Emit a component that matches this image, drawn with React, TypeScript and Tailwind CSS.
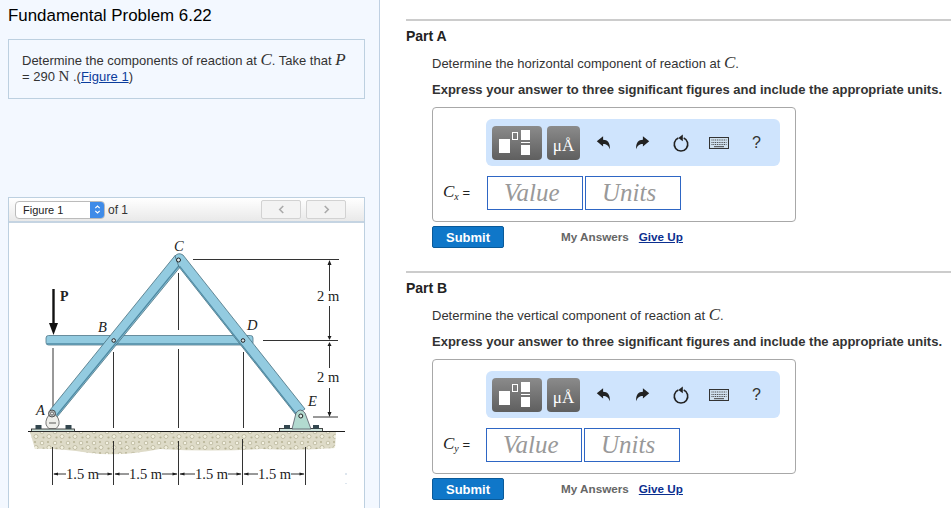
const sans = "font-['Liberation_Sans',Arial,sans-serif]";

function Truss() {
  const dark = "#1c1c1c";
  return (
    <svg viewBox="9 223 355 285" className="block w-[355px] h-[285px]">
      <defs>
        <pattern id="gravel" width="13" height="11" patternUnits="userSpaceOnUse">
          <rect width="13" height="11" fill="#dedbc8" />
          <circle cx="3" cy="3" r="1.800" fill="#f4f2e4" stroke="#aaa688" strokeWidth="0.600" />
          <circle cx="9" cy="2" r="1.100" fill="#b9b597" />
          <circle cx="10" cy="7.500" r="2" fill="#f2f0e0" stroke="#aaa688" strokeWidth="0.600" />
          <circle cx="4.500" cy="8.500" r="1.100" fill="#b5b193" />
        </pattern>
        <filter id="soft" x="-5%" y="-20%" width="110%" height="140%">
          <feGaussianBlur stdDeviation="0.400" />
        </filter>
      </defs>

      {/* ground */}
      <path d="M30 432H336L335 448Q300 451 262 449Q210 452 160 449Q120 457 90 453Q55 448 35 449Z" fill="url(#gravel)" filter="url(#soft)" />
      <path d="M28 431.500H345" stroke={dark} strokeWidth="1" />

      {/* dimension lines */}
      <g stroke={dark} strokeWidth="0.900" fill="none">
        <path d="M53 348V408M113.500 352V428M178.500 273V330M178.500 349V428M243.500 352V428" />
        <path d="M193 259.500H339M263 340.500H338M313 417H338" />
        <path d="M329.500 262V291M329.500 306V338M329.500 343V368M329.500 388V414" />
        <path d="M52.500 447V485M113.500 441V485M178.500 441V485M242.500 439V485M305.500 447V485" />
        <path d="M54 474H66M98 474H112M115 474H129M162 474H177M180 474H195M228 474H241M244 474H258M291 474H304" />
      </g>
      <g fill={dark}>
        <path d="M329.500 260l-2 5h4zM329.500 340l-2-4h4zM329.500 342l-2 4h4zM329.500 417l-2-5h4z" />
        <path d="M53 474l5-1.500v3zM112.500 474l-5-1.500v3zM114.500 474l5-1.500v3zM177.500 474l-5-1.500v3zM179.500 474l5-1.500v3zM241.500 474l-5-1.500v3zM243.500 474l5-1.500v3zM304.500 474l-5-1.500v3z" />
      </g>

      {/* horizontal member */}
      <rect x="46" y="335.500" width="207" height="9.500" rx="2.500" fill="#93cbe0" stroke="#4f7688" strokeWidth="0.800" />
      <path d="M47 343.800H252" stroke="#4f8aa3" strokeWidth="1.200" />

      {/* base plates */}
      <g fill="#cfe3dc" stroke={dark} strokeWidth="0.800">
        <rect x="31.500" y="429" width="43" height="2.500" />
        <rect x="279.500" y="428.500" width="43" height="3" />
      </g>
      <g fill="#33474f">
        <rect x="35.500" y="425" width="6" height="4" />
        <rect x="65.500" y="425" width="6" height="4" />
        <rect x="284" y="425" width="6" height="4" />
        <rect x="313" y="425" width="6" height="4" />
      </g>

      {/* leaning members */}
      <path d="M50 410L175.500 255L181 266L57 417Z" fill="#93cbe0" stroke="#49707f" strokeWidth="0.800" />
      <path d="M56.500 415.500L180 264.500" stroke="#4f8aa3" strokeWidth="1.200" />
      <path d="M175 256Q178.500 252 183 255L305 409L296 415L179 267Z" fill="#93cbe0" stroke="#49707f" strokeWidth="0.800" />
      <path d="M179.500 266L296 413.500" stroke="#4f8aa3" strokeWidth="1.200" />

      {/* support at A */}
      <path d="M47 418Q52 408 58 418Q61 425 56 428.500H49Q44 425 47 418Z" fill="#eeeeea" stroke="#555" strokeWidth="0.800" />
      <path d="M49 423H56" stroke="#333" strokeWidth="0.800" />
      <circle cx="52" cy="413.500" r="3.500" fill="#b8bcbc" stroke="#333" strokeWidth="0.800" />
      <circle cx="52" cy="413.500" r="1.500" fill="#eee" stroke="#333" strokeWidth="0.600" />

      {/* support at E */}
      <path d="M292 429L296 413Q300 407 305 413L311 429Z" fill="#b2dad0" stroke="#445" strokeWidth="0.700" />
      <circle cx="300.800" cy="416" r="2" fill="#dfeee9" stroke="#222" strokeWidth="1" />

      {/* pins */}
      <circle cx="178.500" cy="260" r="2" fill="#dce8ec" stroke="#222" strokeWidth="1" />
      <circle cx="113.700" cy="340.500" r="1.800" fill="#dce8ec" stroke="#222" strokeWidth="1" />
      <circle cx="243" cy="340.500" r="1.800" fill="#dce8ec" stroke="#222" strokeWidth="1" />

      {/* load P */}
      <path d="M53.500 289V326" stroke="#111" strokeWidth="2.400" />
      <path d="M49 323H58L53.500 335Z" fill="#111" />

      {/* labels */}
      <g fontFamily="'Liberation Serif', serif" fontSize="14.500" fill="#222">
        <text x="60" y="301" fontWeight="700" fontSize="14">P</text>
        <g fontStyle="italic">
          <text x="174" y="251">C</text>
          <text x="98" y="331.500">B</text>
          <text x="247" y="330">D</text>
          <text x="36" y="415">A</text>
          <text x="308" y="406">E</text>
        </g>
        <text x="317" y="301">2 m</text>
        <text x="317" y="382">2 m</text>
        <text x="66" y="478.500">1.5 m</text>
        <text x="129" y="478.500">1.5 m</text>
        <text x="195" y="478.500">1.5 m</text>
        <text x="258" y="478.500">1.5 m</text>
      </g>
      <path d="M346 473V475M346 483V484" stroke="#bcd" strokeWidth="1" />
    </svg>
  );
}

function Toolbar() {
  return (
    <div className="w-[294px] h-[47px] bg-[#cfe4fd] rounded-[6px] flex items-center pl-[6px]">
      <div className="w-[50px] h-[34px] rounded-[4px] bg-gradient-to-b from-[#8b8b8b] to-[#5f5f5f] relative">
        <span className="absolute left-[7px] top-[13px] w-[11px] h-[14px] bg-white" />
        <span className="absolute left-[20px] top-[6px] w-[6px] h-[8px] border border-white" />
        <span className="absolute left-[29px] top-[4px] w-[9px] h-[10px] bg-white" />
        <span className="absolute left-[29px] top-[16px] w-[9px] h-[1px] bg-white" />
        <span className="absolute left-[29px] top-[19px] w-[9px] h-[10px] bg-white" />
      </div>
      <div className="w-[33px] h-[34px] ml-[5px] rounded-[4px] bg-gradient-to-b from-[#8b8b8b] to-[#5f5f5f] text-white text-[17px] font-['Liberation_Serif',serif] flex items-end justify-center pb-[6px] leading-none">
        μÅ
      </div>
      <svg viewBox="0 0 20 20" className="w-[18px] h-[18px] ml-[15px]">
        <path d="M2 8L9 2.500V6.500C14 6.500 17 10 16.500 17C15 12.500 13 11 9 11V14Z" fill="#222" />
      </svg>
      <svg viewBox="0 0 20 20" className="w-[18px] h-[18px] ml-[20px]">
        <path d="M18 8L11 2.500V6.500C6 6.500 3 10 3.500 17C5 12.500 7 11 11 11V14Z" fill="#222" />
      </svg>
      <svg viewBox="0 0 20 20" className="w-[18px] h-[18px] ml-[21px]">
        <path d="M7 4.500A7.500 7.500 0 1 0 13 4.500" fill="none" stroke="#222" strokeWidth="1.800" />
        <path d="M12 0.500L7 4.500L12 8Z" fill="#222" />
      </svg>
      <svg viewBox="0 0 20 12" className="w-[20px] h-[12px] ml-[19px]">
        <rect x="0.500" y="0.500" width="19" height="11" fill="#cfe0ee" stroke="#333" />
        <path d="M2.500 3H17.500M2.500 5.500H17.500M2.500 7.500H17.500" stroke="#444" strokeWidth="1" strokeDasharray="1 0.800" />
        <path d="M5 9.700H15" stroke="#444" strokeWidth="1" />
      </svg>
      <span className={`ml-[23px] text-[16px] leading-none text-[#333] ${sans}`}>?</span>
    </div>
  );
}

function Part({ name, word, sub, labelW, gap, sectionHeight }: { name: string; word: string; sub: string; labelW: string; gap: string; sectionHeight: string }) {
  return (
    <section className={`border-t-2 border-[#cccccc] ${sectionHeight}`}>
      <h2 className="text-[14px] font-bold text-[#222] leading-[16px] pt-[7px]">{name}</h2>
      <div className="pl-[26px]">
        <p className="h-[16px] text-[13px] text-[#333] leading-[16px] mt-[10px]">
          Determine the {word} component of reaction at <i className="font-['Liberation_Serif',serif] text-[17px] leading-none">C</i>.
        </p>
        <p className="text-[13px] font-bold text-[#333] leading-[16px] mt-[12px]">
          Express your answer to three significant figures and include the appropriate units.
        </p>
        <div className="w-[364px] h-[115px] mt-[9px] border border-[#a8a8a8] rounded-[4px] pt-[11px]">
          <div className="pl-[53px]">
            <Toolbar />
          </div>
          <div className="flex items-center mt-[10px]">
            <span className={`${labelW} ml-[10px] shrink-0 whitespace-nowrap text-[13px] text-[#222]`}>
              <i className="font-['Liberation_Serif',serif] text-[17px] leading-none">C</i>
              <i className="font-['Liberation_Serif',serif] text-[10px] leading-none relative top-[3px]">{sub}</i> =
            </span>
            <div className={`w-[96px] h-[34px] ${gap} border border-[#2e66c4] text-[#999] italic text-[25px] font-['Liberation_Serif',serif] flex items-center pl-[16px] pb-[2px] leading-none`}>
              Value
            </div>
            <div className="w-[96px] h-[34px] ml-[2px] border border-[#2e66c4] text-[#999] italic text-[25px] font-['Liberation_Serif',serif] flex items-center pl-[16px] pb-[2px] leading-none">
              Units
            </div>
          </div>
        </div>
        <div className="flex items-center mt-[4px]">
          <button className="w-[72px] h-[22px] rounded-[2px] bg-[#0f77c9] border border-[#0a5a99] text-white font-bold text-[13px] leading-none">
            Submit
          </button>
          <span className="ml-[57px] text-[11.700px] font-bold text-[#666]">My Answers</span>
          <a className="ml-[10px] text-[11.700px] font-bold text-[#0b2f8f] underline">Give Up</a>
        </div>
      </div>
    </section>
  );
}

export default function App() {
  return (
    <div className={`w-[951px] h-[508px] overflow-hidden flex bg-white ${sans}`}>
      <aside className="w-[380px] h-[508px] shrink-0 bg-[#f3f8ff] border-r border-[#bfd0e2] pl-[8px] pr-[14px]">
        <h1 className="text-[16.900px] text-black leading-[20px] pt-[6px]">Fundamental Problem 6.22</h1>
        <div className="h-[60px] mt-[13px] border border-[#bdd0e0] pl-[13px] pt-[11px] text-[13px] leading-[16px] text-[#333]">
          <div className="h-[18px]">
            Determine the components of reaction at <i className="font-['Liberation_Serif',serif] text-[17px] leading-none">C</i>. Take that{" "}
            <i className="font-['Liberation_Serif',serif] text-[17px] leading-none">P</i>
          </div>
          <div>
            = 290 <span className="font-['Liberation_Serif',serif] text-[15px] leading-none">N</span> .(
            <a className="text-[#0b3c9c] underline">Figure 1</a>)
          </div>
        </div>
        <div className="mt-[98px] h-[312px] border border-[#bdd0e0] bg-white">
          <div className="h-[25px] bg-gradient-to-b from-white to-[#e9e9e9] border-b-2 border-[#c5d4e2] flex items-center pl-[6px] pr-[18px]">
            <div className="w-[90px] h-[18px] flex rounded-[4px] border border-[#bbbbbb] bg-white overflow-hidden text-[11px] text-[#222]">
              <span className="flex-1 pl-[7px] leading-[16px]">Figure 1</span>
              <span className="w-[14px] bg-[#3f8be8] flex items-center justify-center">
                <svg viewBox="0 0 8 12" className="w-[7px] h-[11px]">
                  <path d="M1.500 4.500L4 2L6.500 4.500M1.500 7.500L4 10L6.500 7.500" fill="none" stroke="white" strokeWidth="1.300" />
                </svg>
              </span>
            </div>
            <span className="ml-[3px] text-[12px] text-[#333]">of 1</span>
            <button className="ml-auto w-[40px] h-[19px] border border-[#d2d2d2] rounded-[2px] bg-[#f3f3f3] flex items-center justify-center">
              <svg viewBox="0 0 8 10" className="w-[7px] h-[9px]">
                <path d="M6 1L2 5L6 9" fill="none" stroke="#aaaaaa" strokeWidth="1.800" />
              </svg>
            </button>
            <button className="ml-[5px] w-[40px] h-[19px] border border-[#d2d2d2] rounded-[2px] bg-[#f3f3f3] flex items-center justify-center">
              <svg viewBox="0 0 8 10" className="w-[7px] h-[9px]">
                <path d="M2 1L6 5L2 9" fill="none" stroke="#aaaaaa" strokeWidth="1.800" />
              </svg>
            </button>
          </div>
          <Truss />
        </div>
      </aside>
      <main className="flex-1 pl-[26px] pt-[19px]">
        <Part name="Part A" word="horizontal" sub="x" labelW="w-[33px]" gap="ml-[11px]" sectionHeight="h-[252px]" />
        <Part name="Part B" word="vertical" sub="y" labelW="w-[33px]" gap="ml-[10px]" sectionHeight="h-[237px]" />
      </main>
    </div>
  );
}
